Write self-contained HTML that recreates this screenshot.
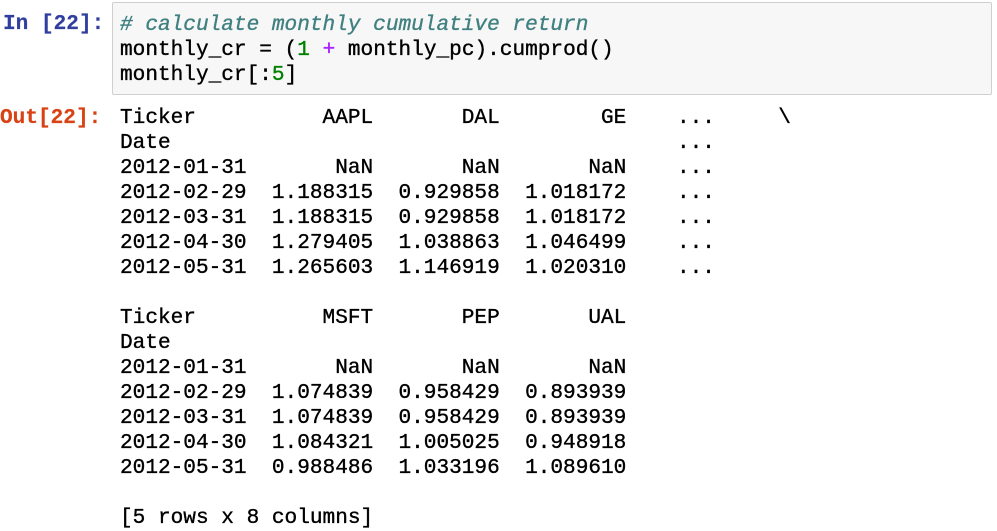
<!DOCTYPE html>
<html><head><meta charset="utf-8"><style>
html,body{margin:0;padding:0;background:#fff;width:997px;height:530px;overflow:hidden}
body{font-family:"Liberation Mono",monospace;font-size:21.1px;line-height:25px;color:#000}
.p{position:absolute;white-space:pre;font-weight:bold;-webkit-text-stroke:0.2px}
.in{color:#303F9F;}
.out{color:#D84315;}
.box{position:absolute;left:112px;top:2px;width:878px;height:91px;background:#f7f7f7;border:1px solid #cfcfcf;border-radius:2px}
pre{margin:0;font:inherit;position:absolute;left:120px;white-space:pre;-webkit-text-stroke:0.35px}
.c{color:#408080;font-style:italic}
.g{color:#008000}
.m{color:#AA22FF}
</style></head><body>
<div class="p in" style="left:3px;top:12px">In [22]:</div>
<div class="box"></div>
<pre style="top:13px"><span class="c"># calculate monthly cumulative return</span>
monthly_cr = (<span class="g">1</span> <span class="m">+</span> monthly_pc).cumprod()
monthly_cr[:<span class="g">5</span>]</pre>
<div class="p out" style="left:0;top:106px">Out[22]:</div>
<pre style="top:106px">Ticker          AAPL       DAL        GE    ...     \
Date                                        ...
2012-01-31       NaN       NaN       NaN    ...
2012-02-29  1.188315  0.929858  1.018172    ...
2012-03-31  1.188315  0.929858  1.018172    ...
2012-04-30  1.279405  1.038863  1.046499    ...
2012-05-31  1.265603  1.146919  1.020310    ...

Ticker          MSFT       PEP       UAL
Date
2012-01-31       NaN       NaN       NaN
2012-02-29  1.074839  0.958429  0.893939
2012-03-31  1.074839  0.958429  0.893939
2012-04-30  1.084321  1.005025  0.948918
2012-05-31  0.988486  1.033196  1.089610

[5 rows x 8 columns]</pre>
</body></html>
